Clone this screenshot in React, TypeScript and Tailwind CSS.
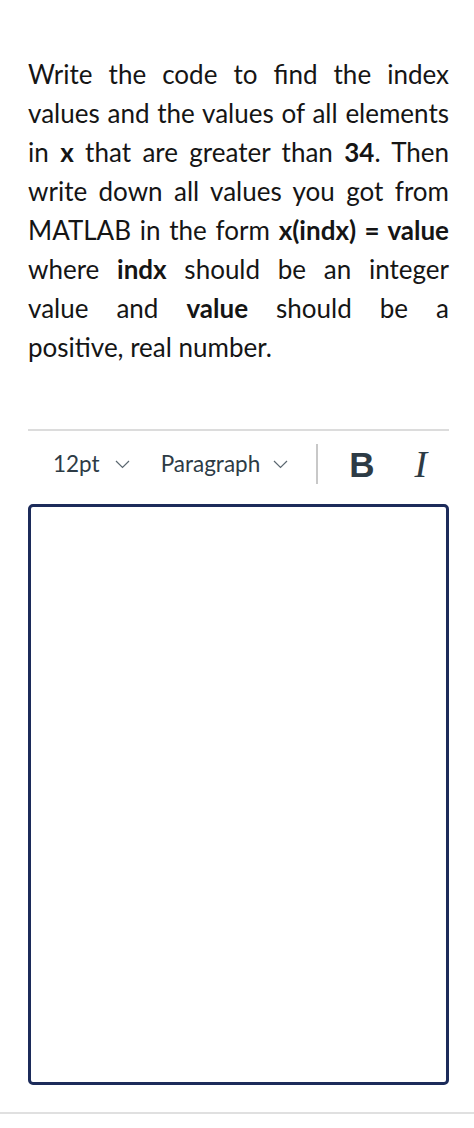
import React from 'react';

function Chevron() {
  return (
    <svg className="w-[15px] h-[9px]" viewBox="0 0 15 9" fill="none" stroke="#5b6770" strokeWidth={1.2}>
      <path d="M1 1l6.5 6.5L14 1" />
    </svg>
  );
}

const Line = ({ children, last }: { children: React.ReactNode; last?: boolean }) => (
  <span className={last ? 'block text-left' : 'block text-justify [text-align-last:justify] whitespace-nowrap'}>{children}</span>
);

export default function App() {
  return (
    <div className="bg-white w-[474px] h-[1128px] flex flex-col" style={{ fontFamily: 'Lato, "Noto Sans", sans-serif' }}>
      <div className="pl-[28px] pr-[25px]">
        {/* Question */}
        <p className="pt-[55px] text-[26px] leading-[39px] text-[#151515]">
          <Line>Write the code to find the index</Line>
          <Line>values and the values of all elements</Line>
          <Line>in <b>x</b> that are greater than <b>34</b>. Then</Line>
          <Line>write down all values you got from</Line>
          <Line>MATLAB in the form <b>x(indx) = value</b></Line>
          <Line>where <b>indx</b> should be an integer</Line>
          <Line>value and <b>value</b> should be a</Line>
          <Line last>positive, real number.</Line>
        </p>

        <div className="mt-[62px] h-[2px] bg-[#dcdcdc]" />

        {/* Toolbar */}
        <div className="h-[66px] flex items-center pl-[25px] text-[22.5px] text-[#2d3b45]">
          <span>12pt</span>
          <span className="ml-[15px]"><Chevron /></span>
          <span className="ml-[31px]">Paragraph</span>
          <span className="ml-[13px]"><Chevron /></span>
          <div className="ml-[28px] w-[2px] h-[40px] bg-[#c8c8c8]" />
          <span className="ml-[31px] text-[35px] font-bold leading-none text-[#2d3b45]" style={{ fontFamily: '"Liberation Sans", Arial, sans-serif' }}>B</span>
          <span className="ml-[40px] text-[38px] italic leading-none text-[#2d3b45]" style={{ fontFamily: '"Liberation Serif", serif' }}>I</span>
        </div>

        {/* Editor */}
        <div className="mt-[7px] h-[581px] border-[3px] border-[#1c2b5a] rounded-[5px]" />
      </div>

      <div className="mt-[27px] h-[2px] bg-[#e0e0e0]" />
    </div>
  );
}
